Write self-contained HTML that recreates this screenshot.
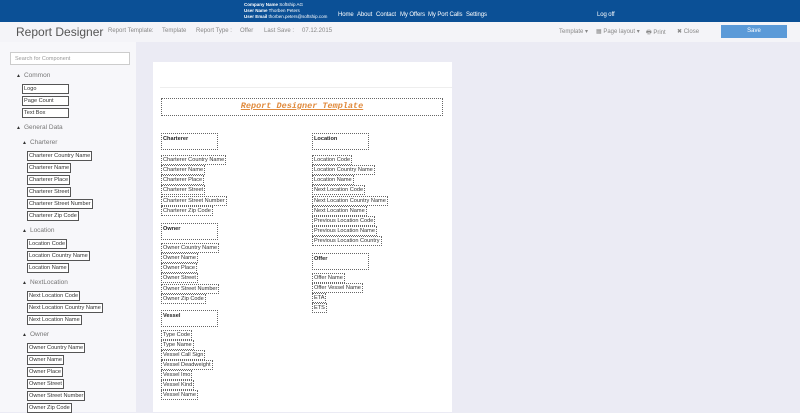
<!DOCTYPE html><html><head><style>
*{margin:0;padding:0;box-sizing:border-box}
body{width:800px;height:412px;overflow:hidden;background:#ebebf4;font-family:"Liberation Sans",sans-serif;position:relative}
.a{position:absolute;white-space:nowrap}
#top{left:0;top:0;width:800px;height:22px;background:#0b5096}
#hdr{left:0;top:22px;width:800px;height:20px;background:#f4f4f8}
#side{left:0;top:42px;width:136px;height:370px;background:#f7f7fa}
.nav{color:#fff;font-size:6px;top:12px;letter-spacing:-0.1px}
.h{color:#888;font-size:6px;top:28px}
.sb{border:1px solid #555;background:#fff;font-size:5.6px;color:#333;height:10px;line-height:8px;padding:0 1px}
.grp{font-size:6.5px;color:#777}
.grp:before{content:"\25B2";font-size:5px;color:#333;margin-right:3px}
.d{border:1px dotted #666;font-size:5.6px;color:#333;height:10px;line-height:8px;padding:0 1px}
.hd{border:1px dotted #666;font-size:5.6px;font-weight:bold;color:#222;height:17px;width:57px;padding:2px 1px}
</style></head><body>
<div class="a" id="top"></div>
<div class="a" style="left:244px;top:2px;color:#fff;font-size:4.5px;line-height:6px"><b>Company Name</b> Softship AG<br><b>User Name</b> Thorben Peters<br><b>User Email</b> thorben.peters@softship.com</div>
<div class="a nav" style="left:338px">Home</div><div class="a nav" style="left:357px">About</div><div class="a nav" style="left:376px">Contact</div><div class="a nav" style="left:400px">My Offers</div><div class="a nav" style="left:428px">My Port Calls</div><div class="a nav" style="left:466px">Settings</div><div class="a nav" style="left:597px">Log off</div>
<div class="a" id="hdr"></div>
<div class="a" style="left:16px;top:25px;font-size:12px;color:#555">Report Designer</div>
<div class="a h" style="left:108px">Report Template:</div><div class="a h" style="left:162px">Template</div><div class="a h" style="left:196px">Report Type :</div><div class="a h" style="left:240px">Offer</div><div class="a h" style="left:264px">Last Save :</div><div class="a h" style="left:302px">07.12.2015</div>
<div class="a h" style="left:559px">Template ▾</div><div class="a h" style="left:596px">▦ Page layout ▾</div><div class="a h" style="left:646px">🖶 Print</div><div class="a h" style="left:677px">✖ Close</div>
<div class="a" style="left:721px;top:25px;width:66px;height:13px;background:#5b9ad8;color:#fff;font-size:6px;text-align:center;line-height:13px">Save</div>
<div class="a" id="side"></div>
<div class="a" style="left:10px;top:52px;width:120px;height:13px;background:#fff;border:1px solid #ccc;font-size:5.5px;color:#999;padding:3px 4px">Search for Component</div>
<div class="a grp" style="left:16px;top:72px">Common</div>
<div class="a sb" style="left:22px;top:84px;width:47px">Logo</div>
<div class="a sb" style="left:22px;top:96px;width:47px">Page Count</div>
<div class="a sb" style="left:22px;top:108px;width:47px">Text Box</div>
<div class="a grp" style="left:16px;top:124px">General Data</div>
<div class="a grp" style="left:22px;top:139px">Charterer</div>
<div class="a sb" style="left:27px;top:151px">Charterer Country Name</div>
<div class="a sb" style="left:27px;top:163px">Charterer Name</div>
<div class="a sb" style="left:27px;top:175px">Charterer Place</div>
<div class="a sb" style="left:27px;top:187px">Charterer Street</div>
<div class="a sb" style="left:27px;top:199px">Charterer Street Number</div>
<div class="a sb" style="left:27px;top:211px">Charterer Zip Code</div>
<div class="a grp" style="left:22px;top:227px">Location</div>
<div class="a sb" style="left:27px;top:239px">Location Code</div>
<div class="a sb" style="left:27px;top:251px">Location Country Name</div>
<div class="a sb" style="left:27px;top:263px">Location Name</div>
<div class="a grp" style="left:22px;top:279px">NextLocation</div>
<div class="a sb" style="left:27px;top:291px">Next Location Code</div>
<div class="a sb" style="left:27px;top:303px">Next Location Country Name</div>
<div class="a sb" style="left:27px;top:315px">Next Location Name</div>
<div class="a grp" style="left:22px;top:331px">Owner</div>
<div class="a sb" style="left:27px;top:343px">Owner Country Name</div>
<div class="a sb" style="left:27px;top:355px">Owner Name</div>
<div class="a sb" style="left:27px;top:367px">Owner Place</div>
<div class="a sb" style="left:27px;top:379px">Owner Street</div>
<div class="a sb" style="left:27px;top:391px">Owner Street Number</div>
<div class="a sb" style="left:27px;top:403px">Owner Zip Code</div>
<div class="a" style="left:153px;top:62px;width:299px;height:350px;background:#fff"></div>
<div class="a" style="left:160px;top:87px;width:292px;height:1px;background:#eee"></div>
<div class="a" style="left:161px;top:98px;width:282px;height:18px;border:1px dotted #666;text-align:center;font-family:'Liberation Mono',monospace;font-style:italic;font-weight:bold;font-size:8.5px;color:#e08a3c;line-height:15px"><u>Report Designer Template</u></div>
<div class="a hd" style="left:161px;top:133px">Charterer</div>
<div class="a d" style="left:161px;top:155px">Charterer Country Name</div>
<div class="a d" style="left:161px;top:165px">Charterer Name</div>
<div class="a d" style="left:161px;top:175px">Charterer Place</div>
<div class="a d" style="left:161px;top:185px">Charterer Street</div>
<div class="a d" style="left:161px;top:196px">Charterer Street Number</div>
<div class="a d" style="left:161px;top:206px">Charterer Zip Code</div>
<div class="a hd" style="left:161px;top:223px">Owner</div>
<div class="a d" style="left:161px;top:243px">Owner Country Name</div>
<div class="a d" style="left:161px;top:253px">Owner Name</div>
<div class="a d" style="left:161px;top:263px">Owner Place</div>
<div class="a d" style="left:161px;top:273px">Owner Street</div>
<div class="a d" style="left:161px;top:284px">Owner Street Number</div>
<div class="a d" style="left:161px;top:294px">Owner Zip Code</div>
<div class="a hd" style="left:161px;top:310px">Vessel</div>
<div class="a d" style="left:161px;top:330px">Type Code</div>
<div class="a d" style="left:161px;top:340px">Type Name</div>
<div class="a d" style="left:161px;top:350px">Vessel Call Sign</div>
<div class="a d" style="left:161px;top:360px">Vessel Deadweight</div>
<div class="a d" style="left:161px;top:370px">Vessel Imo</div>
<div class="a d" style="left:161px;top:380px">Vessel Kind</div>
<div class="a d" style="left:161px;top:390px">Vessel Name</div>
<div class="a hd" style="left:312px;top:133px">Location</div>
<div class="a d" style="left:312px;top:155px">Location Code</div>
<div class="a d" style="left:312px;top:165px">Location Country Name</div>
<div class="a d" style="left:312px;top:175px">Location Name</div>
<div class="a d" style="left:312px;top:185px">Next Location Code</div>
<div class="a d" style="left:312px;top:196px">Next Location Country Name</div>
<div class="a d" style="left:312px;top:206px">Next Location Name</div>
<div class="a d" style="left:312px;top:216px">Previous Location Code</div>
<div class="a d" style="left:312px;top:226px">Previous Location Name</div>
<div class="a d" style="left:312px;top:236px">Previous Location Country</div>
<div class="a hd" style="left:312px;top:253px">Offer</div>
<div class="a d" style="left:312px;top:273px">Offer Name</div>
<div class="a d" style="left:312px;top:283px">Offer Vessel Name</div>
<div class="a d" style="left:312px;top:293px">ETA</div>
<div class="a d" style="left:312px;top:303px">ETS</div>
</body></html>
